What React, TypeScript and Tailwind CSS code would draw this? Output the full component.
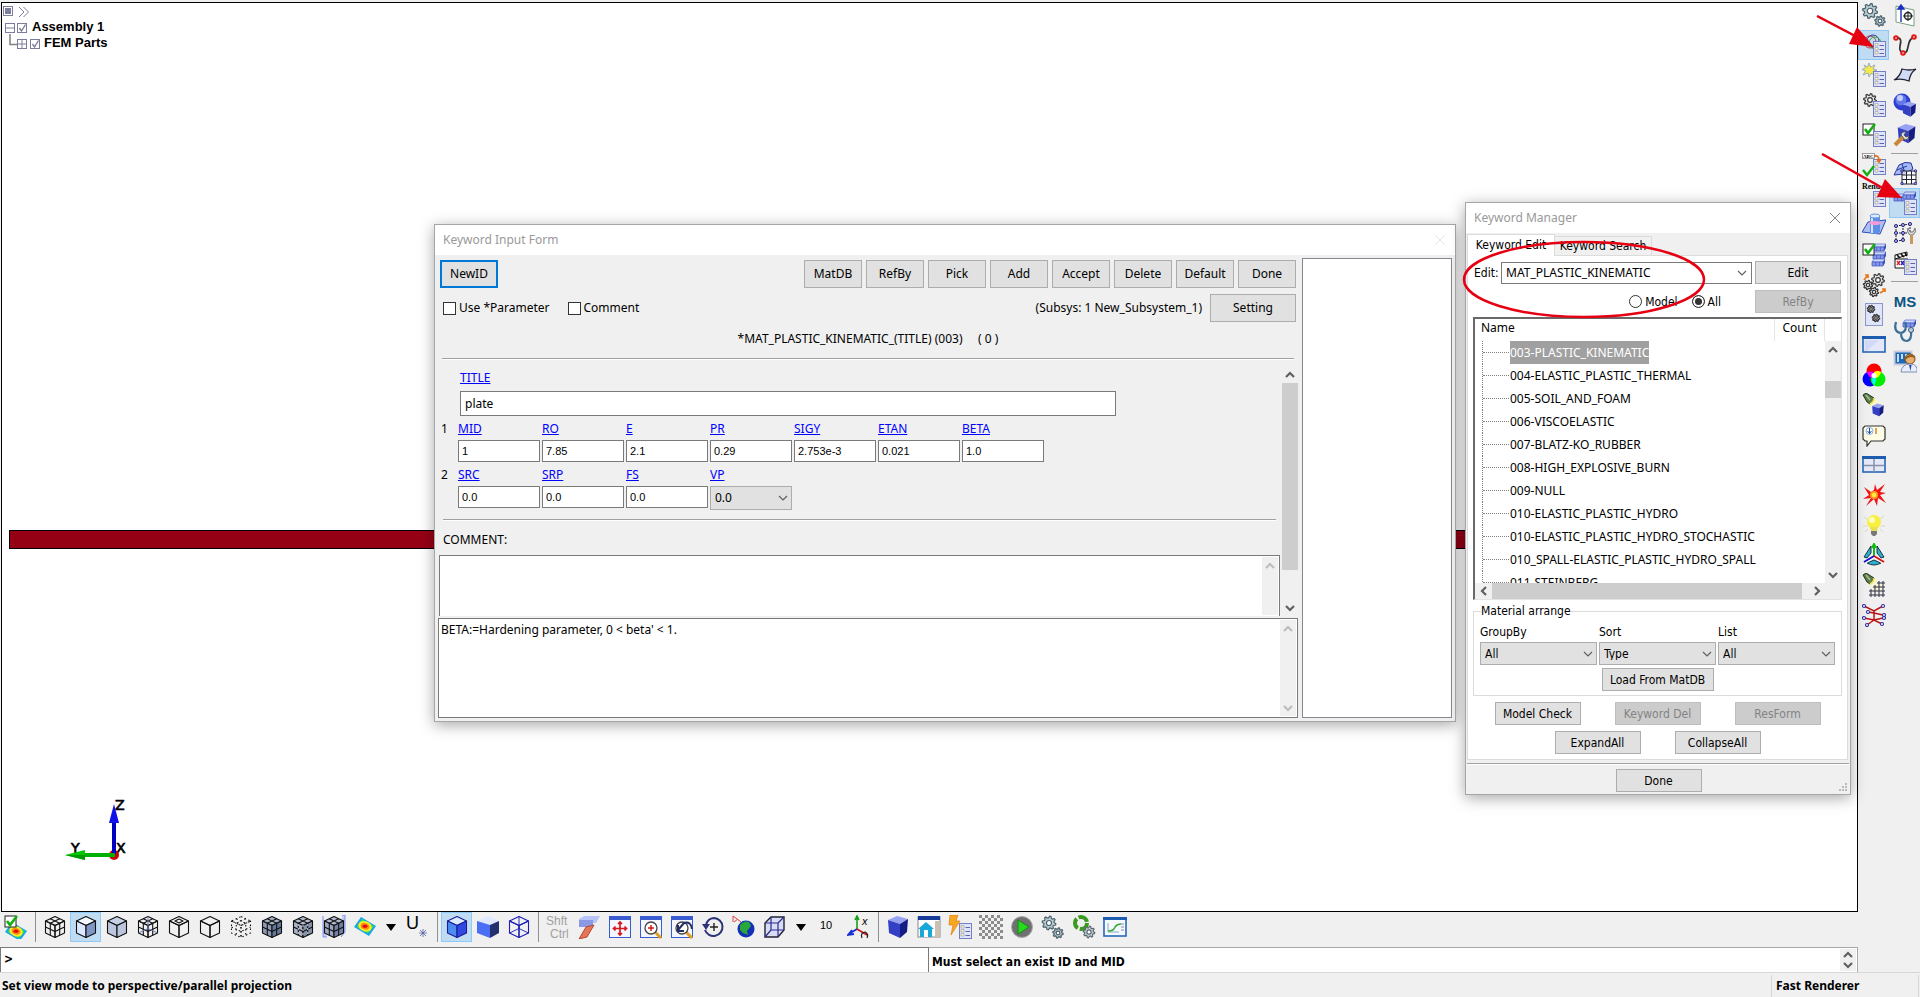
import React from "react";

const UI = "font-['Noto_Sans','Noto_Sans_CJK_SC',sans-serif]";
const TAHOMA = "font-['DejaVu_Sans_Condensed','DejaVu_Sans',sans-serif]";

/* ---------- drawing pieces ---------- */

function gearOutline(x: number, y: number, r: number) {
  const points: string[] = [];
  for (let i = 0; i < 32; i++) {
    const angle = ((i + 0.5) * Math.PI) / 16;
    const radius = i % 4 < 2 ? r * 1.15 : r * 0.86;
    points.push(`${(x + radius * Math.cos(angle)).toFixed(2)},${(y + radius * Math.sin(angle)).toFixed(2)}`);
  }
  return points.join(" ");
}

function Gear({ x, y, r, c = "#333", f = "#e4e4e4" }: { x: number; y: number; r: number; c?: string; f?: string }) {
  return (
    <g stroke={c}>
      <polygon points={gearOutline(x, y, r)} fill={f} strokeWidth="1.2" />
      <circle cx={x} cy={y} r={r * 0.42} fill="#fff" strokeWidth="1.2" />
    </g>
  );
}

function Doc({ x = 11, y = 8 }: { x?: number; y?: number }) {
  return (
    <g transform={`translate(${x} ${y})`}>
      <rect x="0.5" y="0.5" width="12" height="15" fill="#dfe4fb" stroke="#7480c4" />
      <path d="M2 2.500h3v2.500H2zM2 6.500h3v2.500H2zM2 10.500h3v2.500H2z" fill="#fff7b0" stroke="#8d93b8" strokeWidth="0.6" />
      <path d="M6.500 4.500H11M6.500 8.500H11M6.500 12.500H11" stroke="#5b66ac" strokeWidth="1.2" />
    </g>
  );
}

function Tick() {
  return (
    <g>
      <rect x="1" y="1" width="11" height="11" fill="#fff" stroke="#222" />
      <path d="M3 6l3 4 7-9" fill="none" stroke="#12b012" strokeWidth="2.6" />
    </g>
  );
}

type CubeProps = {
  top?: string;
  left?: string;
  right?: string;
  line?: string;
  grid?: boolean;
  back?: boolean;
  face?: boolean;
};

function Cube({ top = "none", left = "none", right = "none", line = "#111", grid, back, face }: CubeProps) {
  return (
    <g stroke={line} strokeWidth="1.1" strokeLinejoin="round">
      <path d="M12 1.500l9.500 4.500-9.500 4.500L2.500 6z" fill={top} />
      <path d="M2.500 6l9.500 4.500v12L2.500 18z" fill={left} />
      <path d="M21.500 6L12 10.500v12l9.500-4.500z" fill={right} />
      {grid && (
        <path
          d="M7.300 3.800l9.400 4.500v12M16.700 3.800L7.300 8.300v12M2.500 12l9.500 4.500 9.500-4.500"
          fill="none"
        />
      )}
      {back && <path d="M12 1.500v12L2.500 18M12 13.500l9.500 4.500" fill="none" strokeWidth="0.9" />}
      {face && <path d="M8 6l4-2 4 2-4 2z" fill="none" />}
    </g>
  );
}

function Svg({ children }: { children: React.ReactNode }) {
  return (
    <svg viewBox="0 0 24 24" className="size-6 shrink-0" aria-hidden="true">
      {children}
    </svg>
  );
}

function Fringe() {
  return (
    <g>
      <path d="M8 2l15 9-7 10L1 12z" fill="#19a4ee" />
      <path d="M9 4l12 7-6 7.500L3.500 12z" fill="#31dd62" />
      <ellipse cx="12" cy="11.300" rx="6.800" ry="5" fill="#f5ee22" transform="rotate(20 12 11.300)" />
      <ellipse cx="12" cy="11.300" rx="4.500" ry="3.200" fill="#ff8a10" transform="rotate(20 12 11.300)" />
      <ellipse cx="12" cy="11.300" rx="2.500" ry="1.700" fill="#e01010" />
    </g>
  );
}

function Solid({ x = 0, y = 0, s = 1 }: { x?: number; y?: number; s?: number }) {
  return (
    <g transform={`translate(${x} ${y}) scale(${s})`}>
      <path d="M2 5l9-4 11 3-8 5z" fill="#98a2f2" />
      <path d="M2 5l12 4v14L3 18z" fill="#3340c4" />
      <path d="M14 9l8-5-1 13-7 6z" fill="#151c84" />
    </g>
  );
}

function Frame({ children }: { children?: React.ReactNode }) {
  return (
    <g>
      <rect x="1.500" y="1.500" width="21" height="21" fill="#f4f7ff" stroke="#3a5bd0" />
      <path d="M1 1h22v4H1z" fill="#3a5bd0" />
      {children}
    </g>
  );
}

function Lens() {
  return (
    <g>
      <path d="M16 17l6 6" stroke="#e0a020" strokeWidth="3" />
      <circle cx="12" cy="13" r="6" fill="#fff" stroke="#444" strokeWidth="1.300" />
    </g>
  );
}

function Lamp() {
  return (
    <g>
      <path d="M7 12l6-6 9 6-7 8z" fill="#fbf7c4" opacity="0.7" />
      <path d="M1 2l3-2 8 5q0 4-4 6L5 9z" fill="#5d7c4c" stroke="#26381e" />
      <path d="M4 2l4 5" stroke="#a8c090" strokeWidth="1.500" />
      <path d="M12 5q0 4-4 6" stroke="#f3e650" strokeWidth="1.600" fill="none" />
    </g>
  );
}

function Screen({ split }: { split?: boolean }) {
  return (
    <g>
      <rect x="1" y="4" width="22" height="15" fill="#e4e8fa" stroke="#2a68b8" strokeWidth="1.600" />
      <path d="M0 3h24v3H0z" fill="#1d5cae" />
      {split ? <path d="M12 6v13M2 12.500h20" stroke="#8792a8" strokeWidth="1.500" /> : <path d="M3 7h14L5 18H3z" fill="#d3daf7" />}
    </g>
  );
}

function Blocks({ x, y }: { x: number; y: number }) {
  return (
    <g transform={`translate(${x} ${y})`}>
      <path d="M0 3l2-3h11l-2 3z" fill="#d0d9fc" stroke="#5568cc" strokeWidth="0.700" />
      <path d="M0 3h11v4H0zM3.700 3v4M7.400 3v4" fill="#8598ee" stroke="#3c50b8" strokeWidth="0.700" />
      <path d="M11 3l2-3v4l-2 3z" fill="#3c50b8" />
    </g>
  );
}

type Tool = { label: string; icon: React.ReactNode; active?: boolean };

/* ---------- side toolbar ---------- */

const sideLeft: Tool[] = [
  { label: "Assembly", icon: <><Gear x={8} y={8} r={6.500} c="#4a636c" f="#b9cbd2" /><Gear x={18} y={18} r={4.500} c="#4a636c" f="#b9cbd2" /></> },
  { label: "Keyword manager", active: true, icon: <><circle cx="8" cy="9" r="6" fill="none" stroke="#c33" /><circle cx="11" cy="8" r="6" fill="none" stroke="#33a" /><circle cx="13" cy="10" r="6" fill="none" stroke="#3a3" /><Doc /></> },
  { label: "Create", icon: <><path d="M7 0l1.500 4L13 2l-2 4 4 1-4 1.500 3 3.500-5-1.500L7 14l-1-4-5 2 2.500-4L0 6.500 3.500 5 2 2l3.500 2z" fill="#f4e84a" stroke="#7a9ad0" strokeWidth="0.700" /><Doc /></> },
  { label: "Modify", icon: <><Gear x={8} y={7} r={5.500} /><Doc /></> },
  { label: "Check", icon: <><Tick /><Doc /></> },
  { label: "Rename check", icon: <><Doc y={6} /><rect x="0.500" y="0.500" width="12" height="5" fill="#fff" stroke="#777" strokeWidth="0.700" /><text x="1" y="5" fontSize="5" fontWeight="700" fontFamily="Liberation Serif, serif">ABC</text><path d="M12 3q5-1 5 4M15 6l2 3 2-3" fill="none" stroke="#e06818" strokeWidth="1.600" /><path d="M1 17l4 5 7-9" fill="none" stroke="#12b012" strokeWidth="2.400" /></> },
  { label: "Renumber", icon: <><text x="0" y="6" fontSize="8" fontWeight="700" fontFamily="Liberation Serif, serif">Renu</text><Doc /></> },
  { label: "Section plane", icon: <><path d="M0 19L6 9l18-2-6 14z" fill="#7f9ef0" fillOpacity="0.600" stroke="#2a4cc0" /><path d="M8 3v16q5 4 10 0V3z" fill="#5f8fe4" /><path d="M10 4v16" stroke="#cfe2ff" strokeWidth="2" /><ellipse cx="13" cy="3" rx="5" ry="2" fill="#dceaff" stroke="#6a90d8" /><ellipse cx="13" cy="10" rx="6" ry="2" fill="#f49ad8" /></> },
  { label: "Part check", icon: <><Blocks x={11} y={1} /><Blocks x={11} y={9} /><Blocks x={10} y={16} /><Tick /></> },
  { label: "Move parts", icon: <><Gear x={16} y={7} r={5.500} /><Gear x={6} y={12} r={4} /><Gear x={12} y={19} r={4} /><path d="M2 7l4-5M3 2h3v3M18 20l5-3M20 16h3v3" stroke="#e87818" strokeWidth="1.700" fill="none" /></> },
  { label: "Part data", icon: <><rect x="3.500" y="0.500" width="17" height="22" fill="#dfe6fb" stroke="#8c98cc" /><Gear x={9} y={6} r={3.200} /><Gear x={14} y={15} r={3.200} /></> },
  { label: "Window", icon: <Screen /> },
  { label: "Color", icon: <><circle cx="12" cy="8" r="7.500" fill="#f00" /><circle cx="8" cy="16" r="7.500" fill="#00f" /><circle cx="16" cy="16" r="7.500" fill="#0e0" /><path d="M12 9a7.500 7.500 0 017 0 7.500 7.500 0 01-7 6.500z" fill="#ff0" /><path d="M5 9a7.500 7.500 0 017 1v5.500A7.500 7.500 0 015 9z" fill="#f0f" /><path d="M12 12a7.500 7.500 0 010 10 7.500 7.500 0 010-10z" fill="#0ff" /><circle cx="12" cy="12.500" r="2.500" fill="#fff" /></> },
  { label: "Shade", icon: <><Lamp /><Solid x={9} y={10} s={0.580} /></> },
  { label: "Annotation", icon: <><path d="M3 3h18l2 2v11l-2 2H9l-4 5v-5H3l-2-2V5z" fill="#fffde6" stroke="#333" strokeWidth="1.200" /><circle cx="7.500" cy="8" r="3.500" fill="#fff" stroke="#8ab0dd" /><path d="M7.500 5v5.500M5.500 8l2 2.500 2-2.500" stroke="#1e4fa8" fill="none" /><path d="M14 5v6" stroke="#d88038" strokeWidth="1.500" /></> },
  { label: "Split window", icon: <Screen split /> },
  { label: "Explode", icon: <><path d="M12 7l1-6 2 6 8-6-5 8 6 1-6 2 6 8-8-5-1 8-3-7-8 7 5-8-8 1 6-4-5-8 7 5z" fill="#f21414" /><circle cx="12" cy="12" r="4" fill="#ff9a20" /><circle cx="12" cy="12" r="2.200" fill="#ffee40" /></> },
  { label: "Light", icon: <><path d="M2 4l4 3M22 3l-4 3M1 13h4M23 13h-4M3 19l3-3M21 19l-3-3" stroke="#d8d8c0" /><circle cx="12" cy="9" r="7" fill="#f8ef40" /><circle cx="10" cy="7" r="3" fill="#fffbc0" /><path d="M8 14h8l-1 4H9z" fill="#eadf50" /><path d="M9 18h6v3l-2 2h-2l-2-2z" fill="#777" /></> },
  { label: "Triad", icon: <><path d="M9 3L2 14l3 1 4-5zM15 3l7 11-3 1-4-5zM5 20q7 4 14 0l-7-3z" fill="#2cb0cc" stroke="#123" strokeWidth="0.900" /><path d="M12 13V2M12 13l-9 6M12 13l9 6" stroke="#fff" strokeWidth="3.500" /><path d="M12 13V2M10 5l2-4 2 4" stroke="#1b1" strokeWidth="2" fill="none" /><path d="M12 13l-10 6" stroke="#11d" strokeWidth="2" /><path d="M12 13l10 6" stroke="#d11" strokeWidth="2" /></> },
  { label: "Node light", icon: <><Lamp /><g fill="#dde" stroke="#223" strokeWidth="1">{[10, 14, 18, 22].map((y, r) => [9, 13, 17, 21].filter((_, i) => i + r > 1).map((x) => <circle key={`${x}-${y}`} cx={x} cy={y} r="1.200" />))}</g></> },
  { label: "Connections", icon: <><path d="M2 3l10 5 9-5M12 8v9M6 9l6 1 9 2M2 15l10 2 9-2M5 22l7-5 8 4" fill="none" stroke="#b81414" strokeWidth="1.500" /><g fill="#fff" stroke="#2a2aa0" strokeWidth="1.100"><circle cx="2" cy="3" r="1.500" /><circle cx="21" cy="3" r="1.500" /><circle cx="6" cy="9" r="1.500" /><circle cx="22" cy="12" r="1.500" /><circle cx="2" cy="15" r="1.500" /><circle cx="22" cy="15" r="1.500" /><circle cx="5" cy="22" r="1.500" /><circle cx="20" cy="21" r="1.500" /></g></> },
];

const sideRight: (Tool | null)[] = [
  { label: "Plane", icon: <><path d="M3 3l18 4v16L3 19z" fill="#fff" stroke="#7aa080" /><path d="M8 19V3M5 6l3-4 3 4z" fill="#1a30c0" stroke="#1a30c0" strokeWidth="1.400" /><circle cx="15" cy="13" r="3.500" fill="none" stroke="#222" strokeWidth="1.400" /><path d="M15 8v10M10 13h10" stroke="#222" /></> },
  { label: "Curve", icon: <><path d="M3 5c6-1 5 4 4 8-1 4 1 7 4 7 6 0 2-14 10-16" fill="none" stroke="#333" strokeWidth="1.700" /><g fill="#fff" stroke="#e01818" strokeWidth="2"><circle cx="3" cy="5" r="1.800" /><circle cx="21" cy="4" r="1.800" /><circle cx="10" cy="20" r="1.800" /></g></> },
  { label: "Surface", icon: <path d="M1 17Q7 14 9 6q7 2 14 0-6 4-7 12-8-3-15-1z" fill="#cfdcf7" stroke="#223" strokeWidth="1.300" /> },
  { label: "Solid", icon: <><circle cx="9" cy="9" r="8.500" fill="#2c3fd0" /><circle cx="8" cy="7" r="5.500" fill="#6478ea" /><circle cx="7" cy="5" r="3" fill="#c4ceff" /><Solid x={8} y={8} s={0.680} /></> },
  { label: "Geometry tools", icon: <><Solid x={3} y={0} s={0.880} /><path d="M2 22l8-8" stroke="#c88a38" strokeWidth="4" /><path d="M8 12q1-4 5-3l-2 3 2 2 3-1q0 4-4 4z" fill="#ddd" stroke="#555" /></> },
  null,
  { label: "Mesh", icon: <><path d="M1 14L6 4q6-4 12-2l2 6-9 5z" fill="#a5b7f4" stroke="#26389c" /><path d="M4 9l10-4M9 3l3 9" stroke="#26389c" /><path d="M9 10h14v13H9zM13.500 10v13M18.500 10v13M9 14h14M9 18.500h14" fill="#fff" fillOpacity="0.700" stroke="#223" /><g fill="#88f" stroke="#115" strokeWidth="0.700"><circle cx="9" cy="10" r="1.300" /><circle cx="22.500" cy="10" r="1.300" /><circle cx="9" cy="22.500" r="1.300" /><circle cx="22.500" cy="22.500" r="1.300" /></g></> },
  { label: "Model", active: true, icon: <><Blocks x={1} y={3} /><Blocks x={10} y={1} /><Doc /></> },
  { label: "Element tools", icon: <><path d="M3 5l14-2M3 12h14M3 20l9-1M3 5v15M10 4v15M17 3v8" fill="none" stroke="#223" strokeDasharray="2 1" /><g fill="#99f" stroke="#115" strokeWidth="0.800"><circle cx="3" cy="5" r="1.600" /><circle cx="10" cy="4" r="1.600" /><circle cx="17" cy="3" r="1.600" /><circle cx="3" cy="12" r="1.600" /><circle cx="10" cy="12" r="1.600" /><circle cx="3" cy="20" r="1.600" /><circle cx="10" cy="19" r="1.600" /></g><path d="M15 7l2 4h3l2-4q2 4-2 7h-3q-4-3-2-7z" fill="#ddd" stroke="#777" /><path d="M18.500 14v9" stroke="#c89860" strokeWidth="3" /></> },
  { label: "Animation", icon: <><path d="M2 4l12-3v3L2 8zM2 8h13v9H2z" fill="#fff" stroke="#111" /><path d="M4 4l3 3M8 3l3 3M12 2l2 3" stroke="#111" strokeWidth="1.700" /><path d="M4 10l3 4M7 10l-3 4" stroke="#d22" strokeWidth="1.400" /><path d="M8 10l3 4M11 10l-3 4" stroke="#22b" strokeWidth="1.400" /><Doc /></> },
  null,
  { label: "Metal stamping", icon: <text x="12" y="18" textAnchor="middle" fontSize="15" fontWeight="700" fontFamily="Liberation Sans, sans-serif" fill="#0b5380">MS</text> },
  { label: "Diagnostics", icon: <><Blocks x={10} y={1} /><path d="M3 3q-3 10 5 11Q15 12 12 3M8 14q0 8 6 8 5-1 4-10" fill="none" stroke="#3b6f98" strokeWidth="2.200" /><circle cx="18" cy="11" r="2.500" fill="#bcd" stroke="#357" /></> },
  { label: "User", icon: <><rect x="1.500" y="2.500" width="17" height="13" fill="#1d6bb8" stroke="#ccd" strokeWidth="2" /><path d="M5 5v8M9 5v5M13 5v3" stroke="#fff" strokeWidth="1.500" /><circle cx="17" cy="10" r="5" fill="#e8b070" stroke="#7a4a18" /><path d="M12 10q4-5 10-2" stroke="#9a6020" strokeWidth="2" fill="none" /><path d="M8 23q1-8 9-8t7 8z" fill="#e8eefc" stroke="#8090b0" /><path d="M16 16l1.500 6 1-6z" fill="#2244aa" /></> },
];

/* ---------- bottom toolbar ---------- */

const shadeTools: Tool[] = [
  { label: "Wire mesh", icon: <Cube grid /> },
  { label: "Shade", active: true, icon: <Cube top="#f4f8ff" left="#dce8ff" right="#7e97c4" /> },
  { label: "Flat", icon: <Cube top="#c8d0e4" left="#bcc6de" right="#bcc6de" /> },
  { label: "Hidden mesh", icon: <><Cube grid /><path d="M12 1.500v12L2.500 18M12 13.500l9.500 4.500" fill="none" stroke="#6c7cb8" /></> },
  { label: "Feature", icon: <Cube face /> },
  { label: "Edge", icon: <Cube /> },
  { label: "Grid", icon: <g strokeDasharray="1.500 2.500"><Cube grid /></g> },
  { label: "Mesh", icon: <Cube grid top="#a4b0c6" left="#8c9ab4" right="#66789a" /> },
  { label: "Shrink", icon: <><Cube grid top="#b4bdd0" left="#a8b2c8" right="#8592ac" /><path d="M12 10v12M7.300 9v11M16.700 9v11" stroke="#fff" strokeDasharray="2 2" strokeWidth="0.800" /></> },
  { label: "Transparent", icon: <><path d="M1 1v21h4M20 0h3v17l-4 5" fill="#c4cdf6" stroke="#8090e8" /><Cube grid top="#b2bbd2" left="#9ca8c2" right="#7483a4" /></> },
  { label: "Fringe", icon: <Fringe /> },
];

const viewTools: Tool[] = [
  { label: "Perspective", active: true, icon: <Cube top="#dcecff" left="#4c8cf0" right="#3048e0" line="#1c1c98" /> },
  { label: "Smooth", icon: <><path d="M1 6l11-5 11 5-9 4z" fill="#dfe8ff" /><path d="M1 6l13 4v13L1 18z" fill="#4a6ef4" /><path d="M14 10l9-4v12l-9 5z" fill="#24306c" /></> },
  { label: "Edges", icon: <Cube line="#1c1cb8" back /> },
];

const cameraTools: Tool[] = [
  { label: "Erase", icon: <><path d="M2 4l5-3h16l-4 7H2z" fill="#b8c4f8" /><path d="M2 5h14v7H2z" fill="#8b98e4" /><path d="M9 12l8-2-7 12-8 2z" fill="#e87458" stroke="#b04a34" /></> },
  { label: "Pan", icon: <Frame><path d="M12 7v13M5.500 13.500h13M10 9l2-2 2 2M10 18l2 2 2-2M7.500 11.500l-2 2 2 2M16.500 11.500l2 2-2 2" fill="none" stroke="#d81818" strokeWidth="1.700" /></Frame> },
  { label: "Zoom in", icon: <Frame><Lens /><path d="M12 10v6M9 13h6" stroke="#d01818" strokeWidth="1.500" /></Frame> },
  { label: "Previous zoom", icon: <Frame><Lens /><path d="M8 15l6-7q7-2 8 6M8 10v6h6" fill="none" stroke="#222c66" strokeWidth="2" /></Frame> },
  { label: "Rotate", icon: <><path d="M4 15a9 9 0 109-12 9 9 0 00-8 7" fill="none" stroke="#2c3478" strokeWidth="2" /><path d="M1 9l4 6 4-6z" fill="#2c3478" /><path d="M13 8v8M9 12h8" stroke="#222" strokeWidth="1.400" /></> },
  { label: "Globe", icon: <><path d="M1 1l8 6M2 7l4-3M1 1v6" stroke="#d44" fill="none" /><circle cx="14" cy="14" r="8.500" fill="#1430b8" /><path d="M8 10q4-5 9-3l2 4-4 5 1 4-5-2-3-3z" fill="#28a838" /></> },
  { label: "View", icon: <><path d="M2 8l6-6h13v13l-6 7H2z" fill="#d8dcf4" stroke="#223" strokeWidth="1.400" /><path d="M2 8h13v14M15 8l6-6M8 2v13h13M8 15l-6 7" fill="none" stroke="#2a2a90" strokeWidth="1.200" /></> },
];

const axisTool: Tool = { label: "Axis rotation", icon: <><path d="M10 14V2M8 5l2-4 2 4" stroke="#18a018" strokeWidth="1.600" fill="none" /><path d="M10 14l-8 5M5 15l-4 5 6-1" stroke="#1a30d0" strokeWidth="1.800" fill="none" /><path d="M10 14l10 6" stroke="#d01818" strokeWidth="1.800" /><text x="15" y="10" fontSize="11" fontStyle="italic" fontFamily="Liberation Sans, sans-serif">x</text><path d="M15 23q-2-5 3-6 4 2 2 6" stroke="#222" strokeWidth="1.200" fill="none" /></> };

const appTools: Tool[] = [
  { label: "Reset", icon: <Solid /> },
  { label: "Home", icon: <><rect x="1" y="2" width="22" height="20" fill="#fff" stroke="#888" /><path d="M1 1h22v4H1z" fill="#163a98" /><path d="M18 6h5v16h-5z" fill="#c8c0b0" /><path d="M1 14l8-7 8 7h-2v8H3v-8z" fill="#18a8d8" /><path d="M7 15h4v7H7z" fill="#fff" /></> },
  { label: "Quick keyword", icon: <><path d="M2 0h8l-2 6h4L3 20l2-10H1z" fill="#f8a820" stroke="#e08010" strokeWidth="0.700" /><Doc /></> },
  { label: "Checkerboard", icon: <g fill="#8c8c8c">{[0, 1, 2, 3, 4, 5, 6, 7].map((r) => [0, 1, 2, 3].map((c) => <rect key={`${r}-${c}`} x={c * 6 + (r % 2) * 3} y={r * 3} width="3" height="3" />))}</g> },
  { label: "Run", icon: <><circle cx="12" cy="12" r="10.500" fill="#707070" stroke="#aaa" /><path d="M8 5l11 7-11 7z" fill="#2bd820" stroke="#109010" /></> },
  { label: "Settings", icon: <><Gear x={8} y={8} r={6} c="#4a636c" f="#b9cbd2" /><Gear x={17} y={18} r={4.500} c="#4a636c" f="#b9cbd2" /></> },
  { label: "Recycle", icon: <><circle cx="9" cy="8" r="6" fill="none" stroke="#3c9a20" strokeWidth="4" strokeDasharray="10.500 2" /><Gear x={17} y={17} r={5} c="#5a6a72" f="#c9d3d6" /></> },
  { label: "Plot", icon: <><rect x="1" y="3" width="22" height="18" fill="#f4f8ff" stroke="#2a68b8" strokeWidth="1.600" /><path d="M0 2h24v3H0z" fill="#1d5cae" /><path d="M5 17h11M5 17V8" stroke="#8ab" /><path d="M5 16q6 0 7-4 2-3 6-3" fill="none" stroke="#3aaa3a" strokeWidth="1.400" /><path d="M18 9h3M18 12h3M18 15h3" stroke="#88a" /></> },
];

function ToolButton({ tool }: { tool: Tool }) {
  return (
    <button
      type="button"
      aria-label={tool.label}
      className={`flex h-[30px] w-[31px] shrink-0 items-center justify-center border ${
        tool.active ? "border-[#90c8f6] bg-[#c0dcf3]" : "border-transparent"
      }`}
    >
      <Svg>{tool.icon}</Svg>
    </button>
  );
}

function Divider() {
  return (
    <div className="flex h-[30px] w-2 shrink-0 justify-center">
      <div className="w-px bg-[#909090]" />
    </div>
  );
}

function DropArrow({ label }: { label: string }) {
  return (
    <button type="button" aria-label={label} className="flex h-[30px] w-[22px] shrink-0 items-center justify-center">
      <svg viewBox="0 0 10 7" className="h-[7px] w-[10px]"><path d="M0 0h10L5 7z" /></svg>
    </button>
  );
}

/* ---------- controls ---------- */

type Dir = "up" | "down" | "left" | "right";
const chevrons: Record<Dir, string> = {
  up: "M1 7l4-4 4 4",
  down: "M1 3l4 4 4-4",
  left: "M7 1L3 5l4 4",
  right: "M3 1l4 4-4 4",
};

function Chevron({ dir, color = "#606060", thin }: { dir: Dir; color?: string; thin?: boolean }) {
  return (
    <svg viewBox="0 0 10 10" className="size-[10px] shrink-0" aria-hidden="true">
      <path d={chevrons[dir]} fill="none" stroke={color} strokeWidth={thin ? 1.2 : 2.2} />
    </svg>
  );
}

function VScroll({ dim, className = "", children }: { dim?: boolean; className?: string; children?: React.ReactNode }) {
  const color = dim ? "#bdbdbd" : "#606060";
  return (
    <div className={`flex w-4 shrink-0 flex-col items-center bg-[#f0f0f0] ${className}`}>
      <button type="button" aria-label="Scroll up" className="flex h-[17px] items-center"><Chevron dir="up" color={color} /></button>
      <div className="flex w-full flex-1 flex-col">{children}</div>
      <button type="button" aria-label="Scroll down" className="flex h-[17px] items-center"><Chevron dir="down" color={color} /></button>
    </div>
  );
}

function Btn({ children, className = "", disabled }: { children: React.ReactNode; className?: string; disabled?: boolean }) {
  return (
    <button
      type="button"
      disabled={disabled}
      className={`shrink-0 border text-center leading-none whitespace-nowrap ${
        disabled ? "border-[#bfbfbf] bg-[#cccccc] text-[#838383]" : "border-[#adadad] bg-[#e1e1e1] text-black"
      } ${className}`}
    >
      {children}
    </button>
  );
}

function Drop({ id, value, className = "" }: { id: string; value: string; className?: string }) {
  return (
    <div className={`relative ${className}`}>
      <select id={id} className="h-full w-full appearance-none border border-[#adadad] bg-[#e1e1e1] pl-1 leading-none text-black">
        <option>{value}</option>
      </select>
      <span className="pointer-events-none absolute inset-y-0 right-1 flex items-center"><Chevron dir="down" thin /></span>
    </div>
  );
}

function Rule({ className = "" }: { className?: string }) {
  return <div className={`h-[2px] border-t border-b border-t-[#a0a0a0] border-b-white ${className}`} />;
}

function Field({ name, value }: { name: string; value: string }) {
  const id = `field-${name}`;
  return (
    <div className="flex flex-col">
      <label htmlFor={id} className="h-[21px] leading-5 text-[#0000ff] underline">{name}</label>
      {name === "VP" ? (
        <Drop id={id} value={value} className="h-6" />
      ) : (
        <input
          id={id}
          defaultValue={value}
          className="h-[22px] w-full border border-[#7a7a7a] bg-white px-[3px] font-['Liberation_Sans',sans-serif] text-[11px]"
        />
      )}
    </div>
  );
}

/* ---------- keyword input form ---------- */

const formButtons = ["MatDB", "RefBy", "Pick", "Add", "Accept", "Delete", "Default", "Done"];
const rowOne = [["MID", "1"], ["RO", "7.85"], ["E", "2.1"], ["PR", "0.29"], ["SIGY", "2.753e-3"], ["ETAN", "0.021"], ["BETA", "1.0"]];
const rowTwo = [["SRC", "0.0"], ["SRP", "0.0"], ["FS", "0.0"], ["VP", "0.0"]];
const CHECK = "mr-[3px] size-[13px] appearance-none border border-[#333] bg-white checked:bg-[#333]";

function KeywordInputForm() {
  return (
    <section
      aria-label="Keyword Input Form"
      className={`absolute top-[224px] left-[434px] w-[1022px] border border-[#a6a6a6] bg-[#f0f0f0] text-[12px] shadow-[0_3px_14px_rgba(0,0,0,0.35)] ${UI}`}
    >
      <header className="flex h-[30px] items-center justify-between bg-white pr-[9px] pl-2 text-[#999]">
        <h2 className="text-[12px]">Keyword Input Form</h2>
        <button type="button" aria-label="Close form">
          <svg viewBox="0 0 12 12" className="size-3"><path d="M1 1l10 10M11 1L1 11" stroke="#e2e2e2" /></svg>
        </button>
      </header>
      <div className="flex gap-1 p-[3px]">
        <div className="flex min-w-0 flex-1 flex-col">
          <div className="flex gap-1 px-[2px] pt-[2px]">
            <button type="button" className="mr-auto h-7 w-[58px] border-2 border-[#0078d7] bg-[#e1e1e1] leading-none">NewID</button>
            {formButtons.map((b) => (
              <Btn key={b} className="h-7 w-[58px]">{b}</Btn>
            ))}
          </div>
          <div className="mt-[6px] flex items-center pr-[2px] pl-[5px]">
            <label className="mr-[18px] flex items-center"><input type="checkbox" className={CHECK} />Use *Parameter</label>
            <label className="flex items-center"><input type="checkbox" className={CHECK} />Comment</label>
            <span className="mr-2 ml-auto">(Subsys: 1 New_Subsystem_1)</span>
            <Btn className="h-7 w-[86px]">Setting</Btn>
          </div>
          <p className="h-9 text-center leading-[34px] whitespace-pre">*MAT_PLASTIC_KINEMATIC_(TITLE) (003)     ( 0 )</p>
          <Rule className="mx-1" />
          <div className="flex h-64">
            <div className="flex min-w-0 flex-1 flex-col overflow-hidden pr-[2px]">
              <div className="mt-2 flex flex-col pl-[22px]">
                <label htmlFor="field-title" className="h-[23px] leading-5 text-[#0000ff] underline">TITLE</label>
                <input id="field-title" defaultValue="plate" className="h-[25px] w-[656px] border border-[#7a7a7a] bg-white px-1" />
              </div>
              <div className="mt-[3px] grid grid-cols-[18px_repeat(7,82px)] gap-x-[2px] gap-y-[3px]">
                <span className="pl-[3px] leading-5">1</span>
                {rowOne.map(([n, v]) => <Field key={n} name={n} value={v} />)}
                <span className="pl-[3px] leading-5">2</span>
                {rowTwo.map(([n, v]) => <Field key={n} name={n} value={v} />)}
              </div>
              <Rule className="mt-[9px] mr-1 ml-[5px] shrink-0" />
              <label htmlFor="comment" className="mt-[9px] mb-[5px] ml-[5px] leading-5">COMMENT:</label>
              <div className="ml-px flex flex-1 border border-b-0 border-[#7a7a7a] bg-white p-px">
                <textarea id="comment" className="min-w-0 flex-1 resize-none" />
                <div className="flex w-4 justify-center bg-[#f0f0f0] pt-1"><Chevron dir="up" color="#bdbdbd" /></div>
              </div>
            </div>
            <VScroll className="mt-[6px]"><div className="h-[187px] bg-[#cdcdcd]" /></VScroll>
          </div>
          <div className="mt-[2px] flex h-[100px] border border-[#7a7a7a] bg-white p-px">
            <textarea
              aria-label="Description"
              readOnly
              defaultValue="BETA:=Hardening parameter, 0 < beta' < 1."
              className="min-w-0 flex-1 resize-none px-px leading-5"
            />
            <VScroll dim />
          </div>
        </div>
        <div className="w-[150px] border border-[#828790] bg-white" />
      </div>
    </section>
  );
}

/* ---------- keyword manager ---------- */

const materials = [
  "003-PLASTIC_KINEMATIC",
  "004-ELASTIC_PLASTIC_THERMAL",
  "005-SOIL_AND_FOAM",
  "006-VISCOELASTIC",
  "007-BLATZ-KO_RUBBER",
  "008-HIGH_EXPLOSIVE_BURN",
  "009-NULL",
  "010-ELASTIC_PLASTIC_HYDRO",
  "010-ELASTIC_PLASTIC_HYDRO_STOCHASTIC",
  "010_SPALL-ELASTIC_PLASTIC_HYDRO_SPALL",
  "011-STEINBERG",
];
const arrange = [["GroupBy", "All"], ["Sort", "Type"], ["List", "All"]];
const RADIO = "mr-[3px] size-[13px] appearance-none rounded-full border border-[#333] bg-white checked:bg-[#333] checked:shadow-[inset_0_0_0_2px_white]";

function KeywordManager() {
  return (
    <section
      aria-label="Keyword Manager"
      className={`absolute top-[202px] left-[1465px] w-[386px] border border-[#a6a6a6] bg-[#f0f0f0] text-[12px] shadow-[0_3px_14px_rgba(0,0,0,0.35)] ${TAHOMA}`}
    >
      <header className={`flex h-[30px] items-center justify-between bg-white pr-[9px] pl-2 text-[#999] ${UI}`}>
        <h2 className="text-[12px]">Keyword Manager</h2>
        <button type="button" aria-label="Close manager">
          <svg viewBox="0 0 12 12" className="size-3"><path d="M1 1l10 10M11 1L1 11" stroke="#888" /></svg>
        </button>
      </header>
      <div className="pt-px pr-[2px] pl-px">
        <div role="tablist" className="flex items-end">
          <button type="button" role="tab" aria-selected="true" className="-mb-px h-[22px] w-[88px] border border-b-0 border-[#dcdcdc] bg-white pb-[2px] whitespace-nowrap">Keyword Edit</button>
          <button type="button" role="tab" aria-selected="false" className="h-[19px] w-[97px] border border-b-0 border-l-0 border-[#dcdcdc] bg-[#f0f0f0] whitespace-nowrap">Keyword Search</button>
        </div>
        <div className="border border-[#dcdcdc] bg-white px-[5px] pt-[5px] pb-[5px]">
          <div className="grid grid-cols-[1fr_86px] items-center gap-x-[3px] gap-y-[6px] pr-px">
            <div className="flex items-center">
              <label htmlFor="edit" className="w-[28px] pl-px">Edit:</label>
              <div className="flex h-[22px] min-w-0 flex-1 items-center border border-[#7a7a7a] pr-1">
                <input id="edit" defaultValue="MAT_PLASTIC_KINEMATIC" className={`min-w-0 flex-1 pl-1 ${UI}`} />
                <button type="button" aria-label="Open list" className="flex"><Chevron dir="down" thin /></button>
              </div>
            </div>
            <Btn className="h-[23px]">Edit</Btn>
            <div className="flex items-center justify-end pr-[31px]">
              <label className="mr-[14px] flex items-center"><input type="radio" name="scope" className={RADIO} />Model</label>
              <label className="flex items-center"><input type="radio" name="scope" defaultChecked className={RADIO} />All</label>
            </div>
            <Btn disabled className="h-[23px]">RefBy</Btn>
          </div>
          <div className={`mt-[4px] border border-t-2 border-l-2 border-[#e3e3e3] border-t-[#696969] border-l-[#696969] ${UI}`}>
            <div className="flex h-[264px]">
              <div className="min-w-0 flex-1 overflow-hidden">
                <table className="w-full border-collapse text-left">
                  <thead>
                    <tr className="h-[22px] align-top">
                      <th className="border-r border-[#e5e5e5] p-0 pl-[6px] leading-[18px] font-normal">Name</th>
                      <th className="w-[50px] border-r border-[#e5e5e5] p-0 text-center leading-[18px] font-normal">Count</th>
                    </tr>
                  </thead>
                  <tbody>
                    {materials.map((m, i) => (
                      <tr key={m} className="h-[23px]">
                        <td colSpan={2} className="p-0 pl-[7px]">
                          <div className="flex h-[23px] items-center border-l border-dotted border-[#808080] whitespace-nowrap">
                            <span className="mr-px h-px w-[26px] border-t border-dotted border-[#808080]" />
                            <span className={i === 0 ? "bg-[#a0a0a0] leading-[23px] text-white" : "leading-[23px]"}>{m}</span>
                          </div>
                        </td>
                      </tr>
                    ))}
                  </tbody>
                </table>
              </div>
              <VScroll className="mt-[22px]"><div className="mt-[23px] h-[17px] bg-[#cdcdcd]" /></VScroll>
            </div>
            <div className="flex h-4 items-center bg-[#f0f0f0] pr-4">
              <button type="button" aria-label="Scroll left" className="flex w-[17px] justify-center"><Chevron dir="left" /></button>
              <div className="flex h-full flex-1 pr-[6px]"><div className="flex-1 bg-[#cdcdcd]" /></div>
              <button type="button" aria-label="Scroll right" className="flex w-[17px] justify-center"><Chevron dir="right" /></button>
            </div>
          </div>
          <fieldset className="mt-[3px] border border-[#dcdcdc] px-[6px] pb-[4px]">
            <legend className="ml-px leading-4">Material arrange</legend>
            <div className="grid grid-cols-3 gap-[2px] pt-[2px]">
              {arrange.map(([n, v]) => (
                <div key={n}>
                  <label htmlFor={`arrange-${n}`} className="block h-[21px] leading-[22px]">{n}</label>
                  <Drop id={`arrange-${n}`} value={v} className="h-[23px]" />
                </div>
              ))}
            </div>
            <Btn className="mx-auto mt-[3px] block h-[23px] w-[112px]">Load From MatDB</Btn>
          </fieldset>
          <div className="mt-[6px] flex justify-center gap-[34px]">
            <Btn className="h-[23px] w-[86px]">Model Check</Btn>
            <Btn disabled className="h-[23px] w-[86px]">Keyword Del</Btn>
            <Btn disabled className="h-[23px] w-[86px]">ResForm</Btn>
          </div>
          <div className="mt-[6px] flex justify-center gap-[34px]">
            <Btn className="h-[23px] w-[86px]">ExpandAll</Btn>
            <Btn className="h-[23px] w-[86px]">CollapseAll</Btn>
          </div>
        </div>
      </div>
      <Rule className="mx-px mt-[3px]" />
      <div className="grid grid-cols-[1fr_auto_1fr] items-end pt-[4px] pr-[2px] pb-[2px] pl-[3px]">
        <Btn className="col-start-2 h-[23px] w-[86px]">Done</Btn>
        <svg viewBox="0 0 9 9" className="size-[9px] justify-self-end" fill="#bbb" aria-hidden="true">
          <path d="M6 0h2v2H6zM6 3h2v2H6zM3 3h2v2H3zM6 6h2v2H6zM3 6h2v2H3zM0 6h2v2H0z" />
        </svg>
      </div>
    </section>
  );
}

/* ---------- viewport ---------- */

function TreeBox({ kind }: { kind: "minus" | "plus" | "check" | "root" }) {
  return (
    <svg viewBox="0 0 11 11" className="size-[11px] shrink-0" fill="none" stroke="#7c7c9c" aria-hidden="true">
      <rect x="0.500" y="0.500" width="9" height="9" strokeWidth="1" />
      {kind === "root" && <path d="M2 2h6v6H2z" fill="#7c7c9c" stroke="none" />}
      {(kind === "minus" || kind === "plus") && <path d="M1 5h8" />}
      {kind === "plus" && <path d="M5 1v8" />}
      {kind === "check" && <path d="M2.500 5l2 3 4-6.500" strokeWidth="1.400" />}
    </svg>
  );
}

function AssemblyTree() {
  return (
    <div className="flex flex-col pt-[2px] pl-px font-['Liberation_Sans',sans-serif] text-[13px] leading-[17px] font-bold">
      <div className="flex h-[13px] items-center gap-[5px]">
        <TreeBox kind="root" />
        <svg viewBox="0 0 10 10" className="size-[10px]" fill="none" stroke="#7c7c9c"><path d="M0 0l5 5-5 5M4.500 0l5 5-5 5" /></svg>
      </div>
      <div className="flex h-4 items-center gap-px pl-[2px]">
        <span className="pt-1"><TreeBox kind="minus" /></span>
        <span className="pt-1"><TreeBox kind="check" /></span>
        <span className="pl-[3px]">Assembly 1</span>
      </div>
      <div className="flex items-center pl-[6px]">
        <svg viewBox="0 0 8 17" className="h-[17px] w-2" fill="none" stroke="#808080" strokeWidth="1.500"><path d="M1 0v10.500H8" /></svg>
        <span className="pt-1"><TreeBox kind="plus" /></span>
        <span className="pt-1 pl-[2px]"><TreeBox kind="check" /></span>
        <span className="pl-[3px]">FEM Parts</span>
      </div>
    </div>
  );
}

function Triad() {
  return (
    <svg viewBox="0 0 70 70" className="absolute bottom-[45px] left-[61px] size-[70px]" aria-label="Axis triad">
      <g fontFamily="DejaVu Sans, sans-serif" fontSize="14" stroke="#000" strokeWidth="0.700">
        <text x="52" y="14">Z</text>
        <text x="8" y="57">Y</text>
        <text x="53" y="57">X</text>
      </g>
      <circle cx="51" cy="59" r="5" fill="#d00000" />
      <path d="M49 20h4v38h-4z" fill="#0000c0" />
      <path d="M51 8l5 19H46z" fill="#1010e8" />
      <path d="M20 57h32v4H20z" fill="#00b000" />
      <path d="M2 59l20-5v10z" fill="#00c800" />
      <path d="M2 59h20v5z" fill="#009a00" />
    </svg>
  );
}

export default function App() {
  return (
    <div className="relative flex min-h-screen flex-col overflow-hidden bg-[#f0f0f0] text-black">
      <div className="flex flex-1">
        <main className="relative mt-[2px] ml-px flex flex-1 flex-col border border-black bg-white">
          <AssemblyTree />
          <div className="absolute top-[527px] right-[200px] left-[7px] h-[19px] border border-black bg-[#960015]" />
          <Triad />
        </main>
        <aside className="flex w-[62px] shrink-0">
          <div className="flex w-[31px] flex-col">
            {sideLeft.map((t) => <ToolButton key={t.label} tool={t} />)}
          </div>
          <div className="flex w-[31px] flex-col">
            {sideRight.map((t, i) =>
              t ? (
                <ToolButton key={t.label} tool={t} />
              ) : (
                <div key={i} className="mx-[2px] my-[3px] h-[2px] border-t border-[#a0a0a0]" />
              )
            )}
          </div>
        </aside>
      </div>

      <nav aria-label="View tools" className="flex h-[35px] items-start">
        <ToolButton tool={{ label: "Fringe check", icon: <><g transform="translate(0 5)"><Fringe /></g><Tick /></> }} />
        <Divider />
        {shadeTools.map((t) => <ToolButton key={t.label} tool={t} />)}
        <DropArrow label="More shading" />
        <button type="button" className="flex h-[30px] w-[31px] shrink-0 items-center pl-1 font-['Liberation_Sans',sans-serif] text-[18px] leading-none">
          <span className="pb-2">U</span>
          <svg viewBox="0 0 8 8" className="mt-3 size-2" fill="none" stroke="#5560a0"><path d="M4 0v8M0 4h8M1 1l6 6M7 1L1 7" strokeWidth="0.800" /></svg>
        </button>
        <Divider />
        {viewTools.map((t) => <ToolButton key={t.label} tool={t} />)}
        <Divider />
        <button type="button" className="flex h-[30px] w-[31px] shrink-0 flex-col pt-[3px] pl-1 text-left font-['Liberation_Sans',sans-serif] text-[12px] leading-[13px] text-[#a0a0a0]">
          <span>Shft</span>
          <span className="pl-1">Ctrl</span>
        </button>
        {cameraTools.map((t) => <ToolButton key={t.label} tool={t} />)}
        <DropArrow label="More views" />
        <button type="button" className="h-[30px] w-[31px] shrink-0 pr-[3px] pb-1 font-['Liberation_Sans',sans-serif] text-[11px]">10</button>
        <ToolButton tool={axisTool} />
        <Divider />
        {appTools.map((t) => <ToolButton key={t.label} tool={t} />)}
      </nav>

      <div className={`mr-[62px] grid h-[25px] grid-cols-2 text-[12px] font-bold ${TAHOMA}`}>
        <label className="flex items-center border border-[#7a7a7a] bg-white pl-[3px]">
          <span className="pb-[2px]">&gt;</span>
          <input aria-label="Command" className="min-w-0 flex-1 outline-none" />
        </label>
        <div className="flex items-center justify-between border border-l-0 border-[#a6a6a6] bg-white p-px pl-[3px]">
          <output className="pt-[3px]">Must select an exist ID and MID</output>
          <div className="flex h-full w-4 flex-col items-center justify-between bg-[#f0f0f0] py-px">
            <Chevron dir="up" />
            <Chevron dir="down" />
          </div>
        </div>
      </div>

      <footer className={`flex h-[25px] items-center justify-between border-t border-[#d7d7d7] pt-[2px] pl-[2px] text-[12px] font-bold ${UI}`}>
        <span>Set view mode to perspective/parallel projection</span>
        <span className="mr-px w-[148px] border-x border-[#d7d7d7] pl-1 leading-[22px]">Fast Renderer</span>
      </footer>

      <KeywordInputForm />
      <KeywordManager />

      <svg viewBox="0 0 246 80" className="pointer-events-none absolute top-[240px] left-[1461px] h-20 w-[246px]" aria-hidden="true">
        <ellipse cx="123" cy="39.500" rx="120" ry="37.500" fill="none" stroke="#e60012" strokeWidth="2.500" />
      </svg>
      <svg viewBox="0 0 60 34" className="pointer-events-none absolute top-[15px] left-[1815px] h-[34px] w-[60px]" aria-hidden="true">
        <path d="M2 1l42 22" stroke="#e60012" strokeWidth="2.500" />
        <path d="M42 12l17 20-25-3z" fill="#e60012" />
      </svg>
      <svg viewBox="0 0 84 46" className="pointer-events-none absolute top-[153px] left-[1820px] h-[46px] w-[84px]" aria-hidden="true">
        <path d="M2 1l66 37" stroke="#e60012" strokeWidth="2.500" />
        <path d="M65 26l17 19-25-1z" fill="#e60012" />
      </svg>
    </div>
  );
}
